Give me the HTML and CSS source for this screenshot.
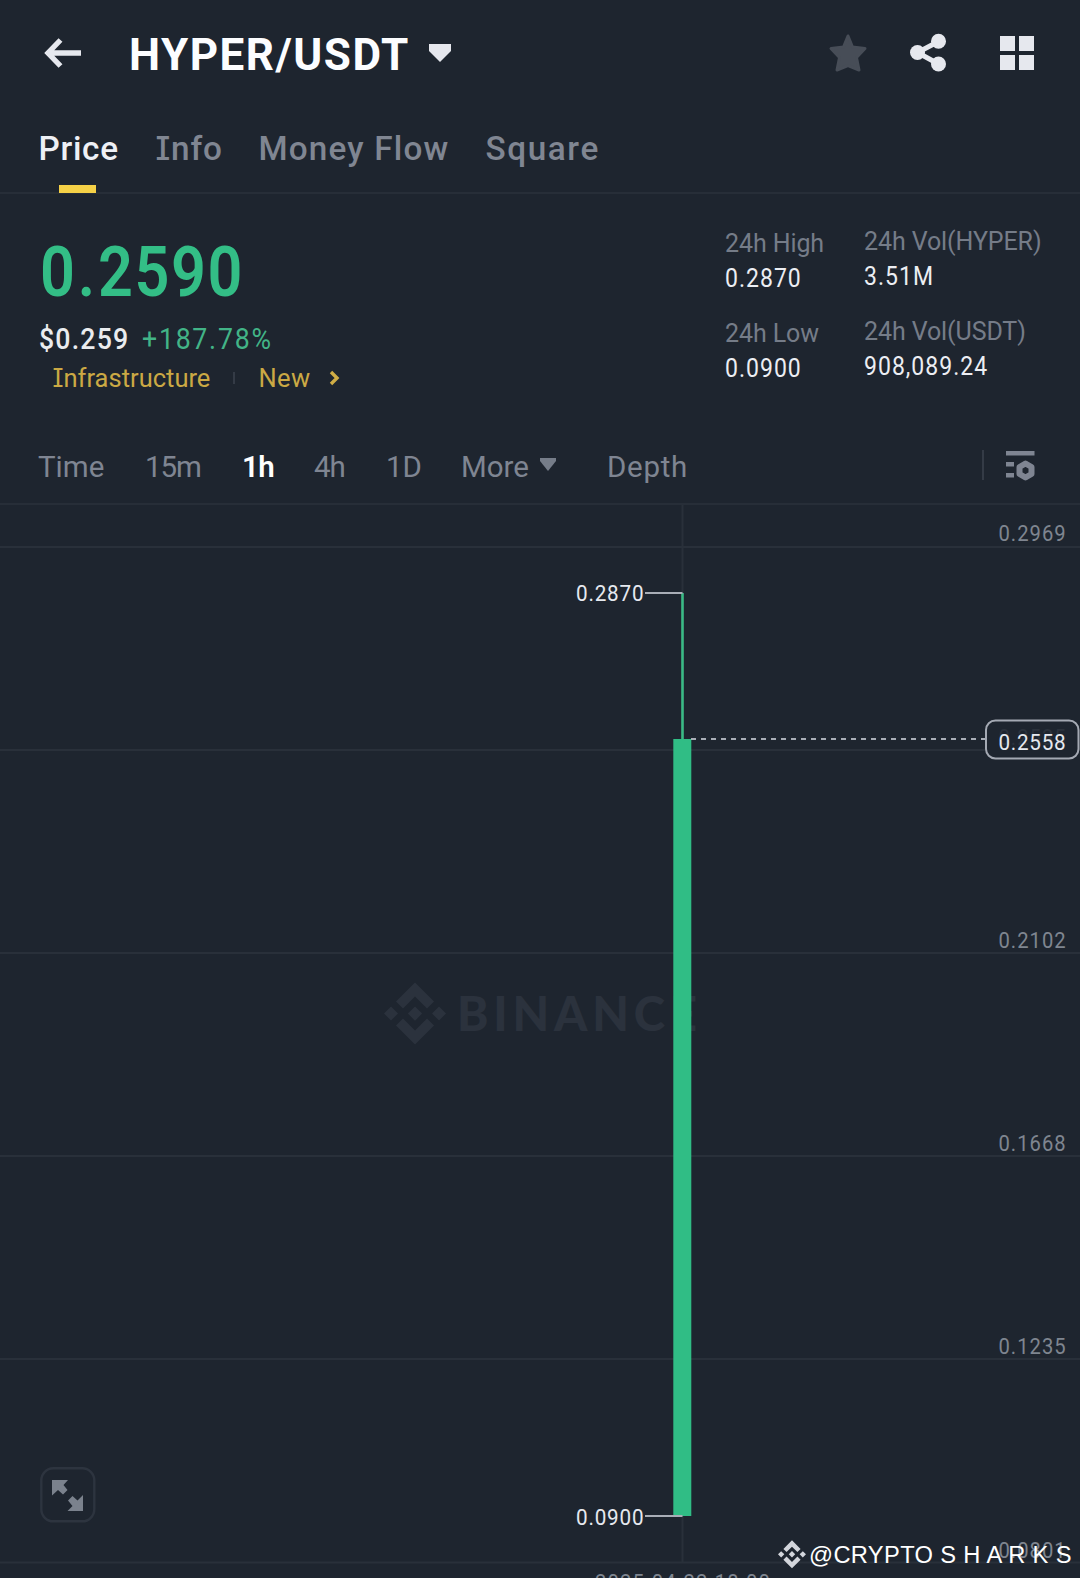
FILE: index.html
```html
<!DOCTYPE html>
<html lang="en">
<head>
<meta charset="utf-8">
<title>HYPER/USDT</title>
<link rel="stylesheet" href="styles.css">
</head>
<body>
<header class="topbar">
  <svg class="back" width="38" height="32" viewBox="0 0 38 32"><path d="M37 16H4M16.500 3L4 16L16.500 29" fill="none" stroke="#e6e8ee" stroke-width="5.400"/></svg>
  <h1 class="pair">HYPER/USDT</h1>
  <svg class="pair-caret" width="24" height="20" viewBox="0 0 24 20"><path d="M1 1H23V8L12 19L1 8Z" fill="#e6e8ee"/></svg>
  <div class="actions">
    <svg width="40" height="40" viewBox="0 0 40 40"><path d="M20 3L24.500 14L37 15.500L28.500 24.500L31 37L20 32.500L9 37L11.500 24.500L3 15.500L15.500 14Z" fill="#474d57" stroke="#474d57" stroke-width="3" stroke-linejoin="round"/></svg>
    <svg class="share" width="38" height="40" viewBox="0 0 38 40"><path d="M29.500 8.500L8.500 19.500L29.500 31" fill="none" stroke="#e6e8ee" stroke-width="5"/><g fill="#e6e8ee"><circle cx="29.500" cy="8.200" r="7.500"/><circle cx="8.500" cy="19.500" r="7.500"/><circle cx="29.500" cy="31" r="7.500"/></g></svg>
    <svg class="grid" width="34" height="34" viewBox="0 0 34 34"><path d="M0 0H15V15H0ZM19 0H34V15H19ZM0 19H15V34H0ZM19 19H34V34H19Z" fill="#e6e8ee"/></svg>
  </div>
</header>
<nav class="tabs">
  <span class="tab active">Price</span>
  <span class="tab info"><b class="slab">I</b>nfo</span>
  <span class="tab flow">Money Flow</span>
  <span class="tab square">Square</span>
</nav>
<section class="summary">
  <div class="quote">
    <div class="last">0<span class="dot">.</span>2590</div>
    <div class="change"><span class="num usd">$0.259</span><span class="num pct">+187.78%</span></div>
    <div class="tags"><span><b class="slab">I</b>nfrastructure</span><i class="sep"></i><span class="new">New</span><svg width="12" height="16" viewBox="0 0 12 16"><path d="M2 2L8 8L2 14" fill="none" stroke="#d0ad45" stroke-width="3.400"/></svg></div>
  </div>
  <dl class="stats">
    <dt>24h High</dt><dd class="num">0.2870</dd>
    <dt>24h Low</dt><dd class="num">0.0900</dd>
  </dl>
  <dl class="stats volume">
    <dt>24h Vol(HYPER)</dt><dd class="num">3.51M</dd>
    <dt>24h Vol(USDT)</dt><dd class="num">908,089.24</dd>
  </dl>
</section>
<nav class="intervals">
  <span>Time</span><span class="tight">15m</span><span class="on">1h</span><span class="tight">4h</span><span>1D</span><span>More</span>
  <svg class="more-caret" width="16" height="14" viewBox="0 0 16 14"><path d="M0 0H16V3L8 13L0 3Z" fill="#767d89"/></svg>
  <span class="depth">Depth</span>
  <i class="bar"></i>
  <svg class="settings" width="30" height="32" viewBox="0 0 30 32"><path d="M0 1H28.500V5.500H0ZM0 12H8V16.500H0ZM0 23H8V27.500H0Z" fill="#7f8592"/><path d="M19.500 13.500L25.500 17V24L19.500 27.500L13.500 24V17Z" fill="none" stroke="#7f8592" stroke-width="6" stroke-linejoin="round"/></svg>
</nav>
<svg class="chart" width="1080" height="1073" viewBox="0 505 1080 1073">
  <g class="watermark">
    <path transform="translate(384 982.500) scale(.49)" d="M38.730 53.200L63.300 28.630L87.880 53.210L102.170 38.920L63.300 0L24.440 38.860ZM0 63.310L14.300 49.010L28.600 63.310L14.300 77.610ZM38.730 73.410L63.300 98L87.880 73.400L102.180 87.680L63.300 126.610L24.430 87.740ZM98 63.310L112.300 49.010L126.600 63.310L112.300 77.610ZM77.830 63.300L63.300 48.770L48.770 63.300L63.300 77.830Z"/>
    <text x="457" y="1030.500" textLength="240">BINANCE</text>
  </g>
  <path class="gridline" d="M0 547H1080M0 750H1080M0 953H1080M0 1156H1080M0 1359H1080M0 1562.500H1080M682.500 505V1562"/>
  <g class="axis">
    <text transform="translate(998.500 541.300) scale(.92 1)" textLength="73">0.2969</text>
    <text transform="translate(998.500 948.200) scale(.92 1)" textLength="73">0.2102</text>
    <text transform="translate(998.500 1151.200) scale(.92 1)" textLength="73">0.1668</text>
    <text transform="translate(998.500 1354.200) scale(.92 1)" textLength="73">0.1235</text>
    <text transform="translate(998.500 1557.500) scale(.92 1)" textLength="73">0.0801</text>
    <text transform="translate(595 1590) scale(.92 1)" textLength="190">2025-04-22 18:00</text>
  </g>
  <path class="wick" d="M682.500 593V739"/>
  <rect class="candle" x="673.300" y="739" width="18" height="777"/>
  <path class="leader" d="M645 593H682.500M645 1516H682.500"/>
  <path class="leader dashed" d="M691 739H985"/>
  <text class="extreme" transform="translate(576 601.300) scale(.92 1)" textLength="73.500">0.2870</text>
  <text class="extreme" transform="translate(576 1525.200) scale(.92 1)" textLength="73.500">0.0900</text>
  <rect class="tag" x="986" y="720.500" width="92.500" height="38" rx="9.500"/>
  <text class="ghost" transform="translate(998.500 745) scale(.92 1)" textLength="73">0.2535</text>
  <text class="extreme" transform="translate(998.500 750.300) scale(.92 1)" textLength="73">0.2558</text>
  <rect class="expand" x="41.300" y="1468.300" width="53" height="53" rx="12"/>
  <path fill="#7b828d" d="M52 1480H68L63.500 1485L67.500 1490L63 1494.500L58 1490L52 1495.500ZM83 1511H67.500L72.500 1506L68 1500.500L72.500 1496L77.500 1500.500L83 1495Z"/>
  <g class="credit">
    <path transform="translate(778 1540.300) scale(.221)" d="M38.730 53.200L63.300 28.630L87.880 53.210L102.170 38.920L63.300 0L24.440 38.860ZM0 63.310L14.300 49.010L28.600 63.310L14.300 77.610ZM38.730 73.410L63.300 98L87.880 73.400L102.180 87.680L63.300 126.610L24.430 87.740ZM98 63.310L112.300 49.010L126.600 63.310L112.300 77.610ZM77.830 63.300L63.300 48.770L48.770 63.300L63.300 77.830Z"/>
    <text x="809" y="1563" textLength="262.500">@CRYPTO S H A R K S</text>
  </g>
</svg>
</body>
</html>
```
FILE: styles.css
```css
*{box-sizing:border-box}
body{margin:0;width:1080px;height:1578px;overflow:hidden;background:#1e252f;color:#eaecef;font-family:Roboto,"Liberation Sans",sans-serif}
svg{display:block;flex:none}
.slab{font-family:Inter,sans-serif;font-weight:inherit;font-size:.98em;line-height:1;font-feature-settings:"cv08" 1}
.num{transform:scaleX(.92);transform-origin:left;letter-spacing:1.1px}

.topbar{display:flex;align-items:center;height:106px;padding:0 46px 0 44px}
.pair{margin:0 0 0 47px;padding-top:3px;font-size:44px;font-weight:700;letter-spacing:1.5px;color:#fcfdff}
.pair-caret{margin:0 0 1px 18px}
.actions{margin-left:auto;display:flex;align-items:center}
.share{margin-left:41px}
.grid{margin-left:53px}

.tabs{display:grid;grid-template-columns:117px 103px 227px auto;height:88px;padding:22px 0 0 38.5px;border-bottom:2px solid #272e38;font-size:33.3px;line-height:41px;font-weight:500;color:#808692}
.tab{position:relative}
.active{color:#eef0f5;letter-spacing:.7px}
.active::after{content:"";position:absolute;left:20.5px;bottom:-1px;width:37px;height:8px;background:#f5d147}
.info{letter-spacing:.8px}
.flow{letter-spacing:1.17px}
.square{letter-spacing:1.6px}

.summary{display:grid;grid-template-columns:686.5px 139px auto;height:236px;padding-left:38.5px}
.quote{padding-top:44px}
.last{width:230px;transform:scaleX(.88);transform-origin:left;padding-left:1px;white-space:nowrap;font-size:69.5px;line-height:70px;font-weight:600;letter-spacing:1.8px;color:#33be86}
.dot{margin:0 1.5px}
.change{display:flex;margin-top:13px;font-size:29px;line-height:36px;font-weight:500}
.usd{letter-spacing:1.3px;margin-right:5px}
.pct{font-weight:400;letter-spacing:1.9px;color:#42b487}
.tags{display:flex;align-items:center;margin-top:6px;padding-left:14px;font-size:25.5px;line-height:30px;color:#cba944}
.sep{width:2px;height:12px;margin:0 23px 0 23px;background:#343b46}
.new{letter-spacing:.5px;margin-right:18.5px}
.stats{margin:0;padding-top:35px;font-size:25px;line-height:30px}
.stats dt{color:#757c88;letter-spacing:-.1px}
.stats dd{margin:5px 0 25px;color:#eceef3}
.volume{padding-top:33px}

.intervals{display:grid;grid-template-columns:107px 97px 72px 72px 75px 79px 67px 375px 24px auto;height:75px;padding:17px 0 0 38px;border-bottom:2px solid #272e38;font-size:29.5px;line-height:40px;color:#7f8592}
.on{font-weight:600;letter-spacing:-.7px;color:#fff}
.tight{letter-spacing:-1.1px}
.depth{letter-spacing:.7px}
.more-caret{margin-top:11px}
.bar{width:2px;height:30px;margin-top:3px;background:#343b46}
.settings{margin-top:3px}

.chart text{font-family:Roboto,"Liberation Sans",sans-serif}
.chart .watermark{fill:#2b323d}
.chart .watermark text{font:900 47.5px Lato,sans-serif}
.gridline{fill:none;stroke:#29303a;stroke-width:2}
.axis{fill:#7f8590;font-size:22px}
.wick{stroke:#3aba86;stroke-width:2.6}
.candle{fill:#30bd85}
.leader{fill:none;stroke:#a9aeb7;stroke-width:2}
.dashed{stroke-dasharray:5 5}
.extreme{fill:#e6e9ef;font-size:22.5px}
.tag{fill:#1e252f;stroke:#a4a9b3;stroke-width:2}
.ghost{fill:#2b323c;font-size:22px}
.expand{fill:none;stroke:#2d343f;stroke-width:2.4}
.credit path{fill:#d3d6dc}
.chart .credit text{fill:#fff;font:23.7px "Liberation Sans",sans-serif}
```
